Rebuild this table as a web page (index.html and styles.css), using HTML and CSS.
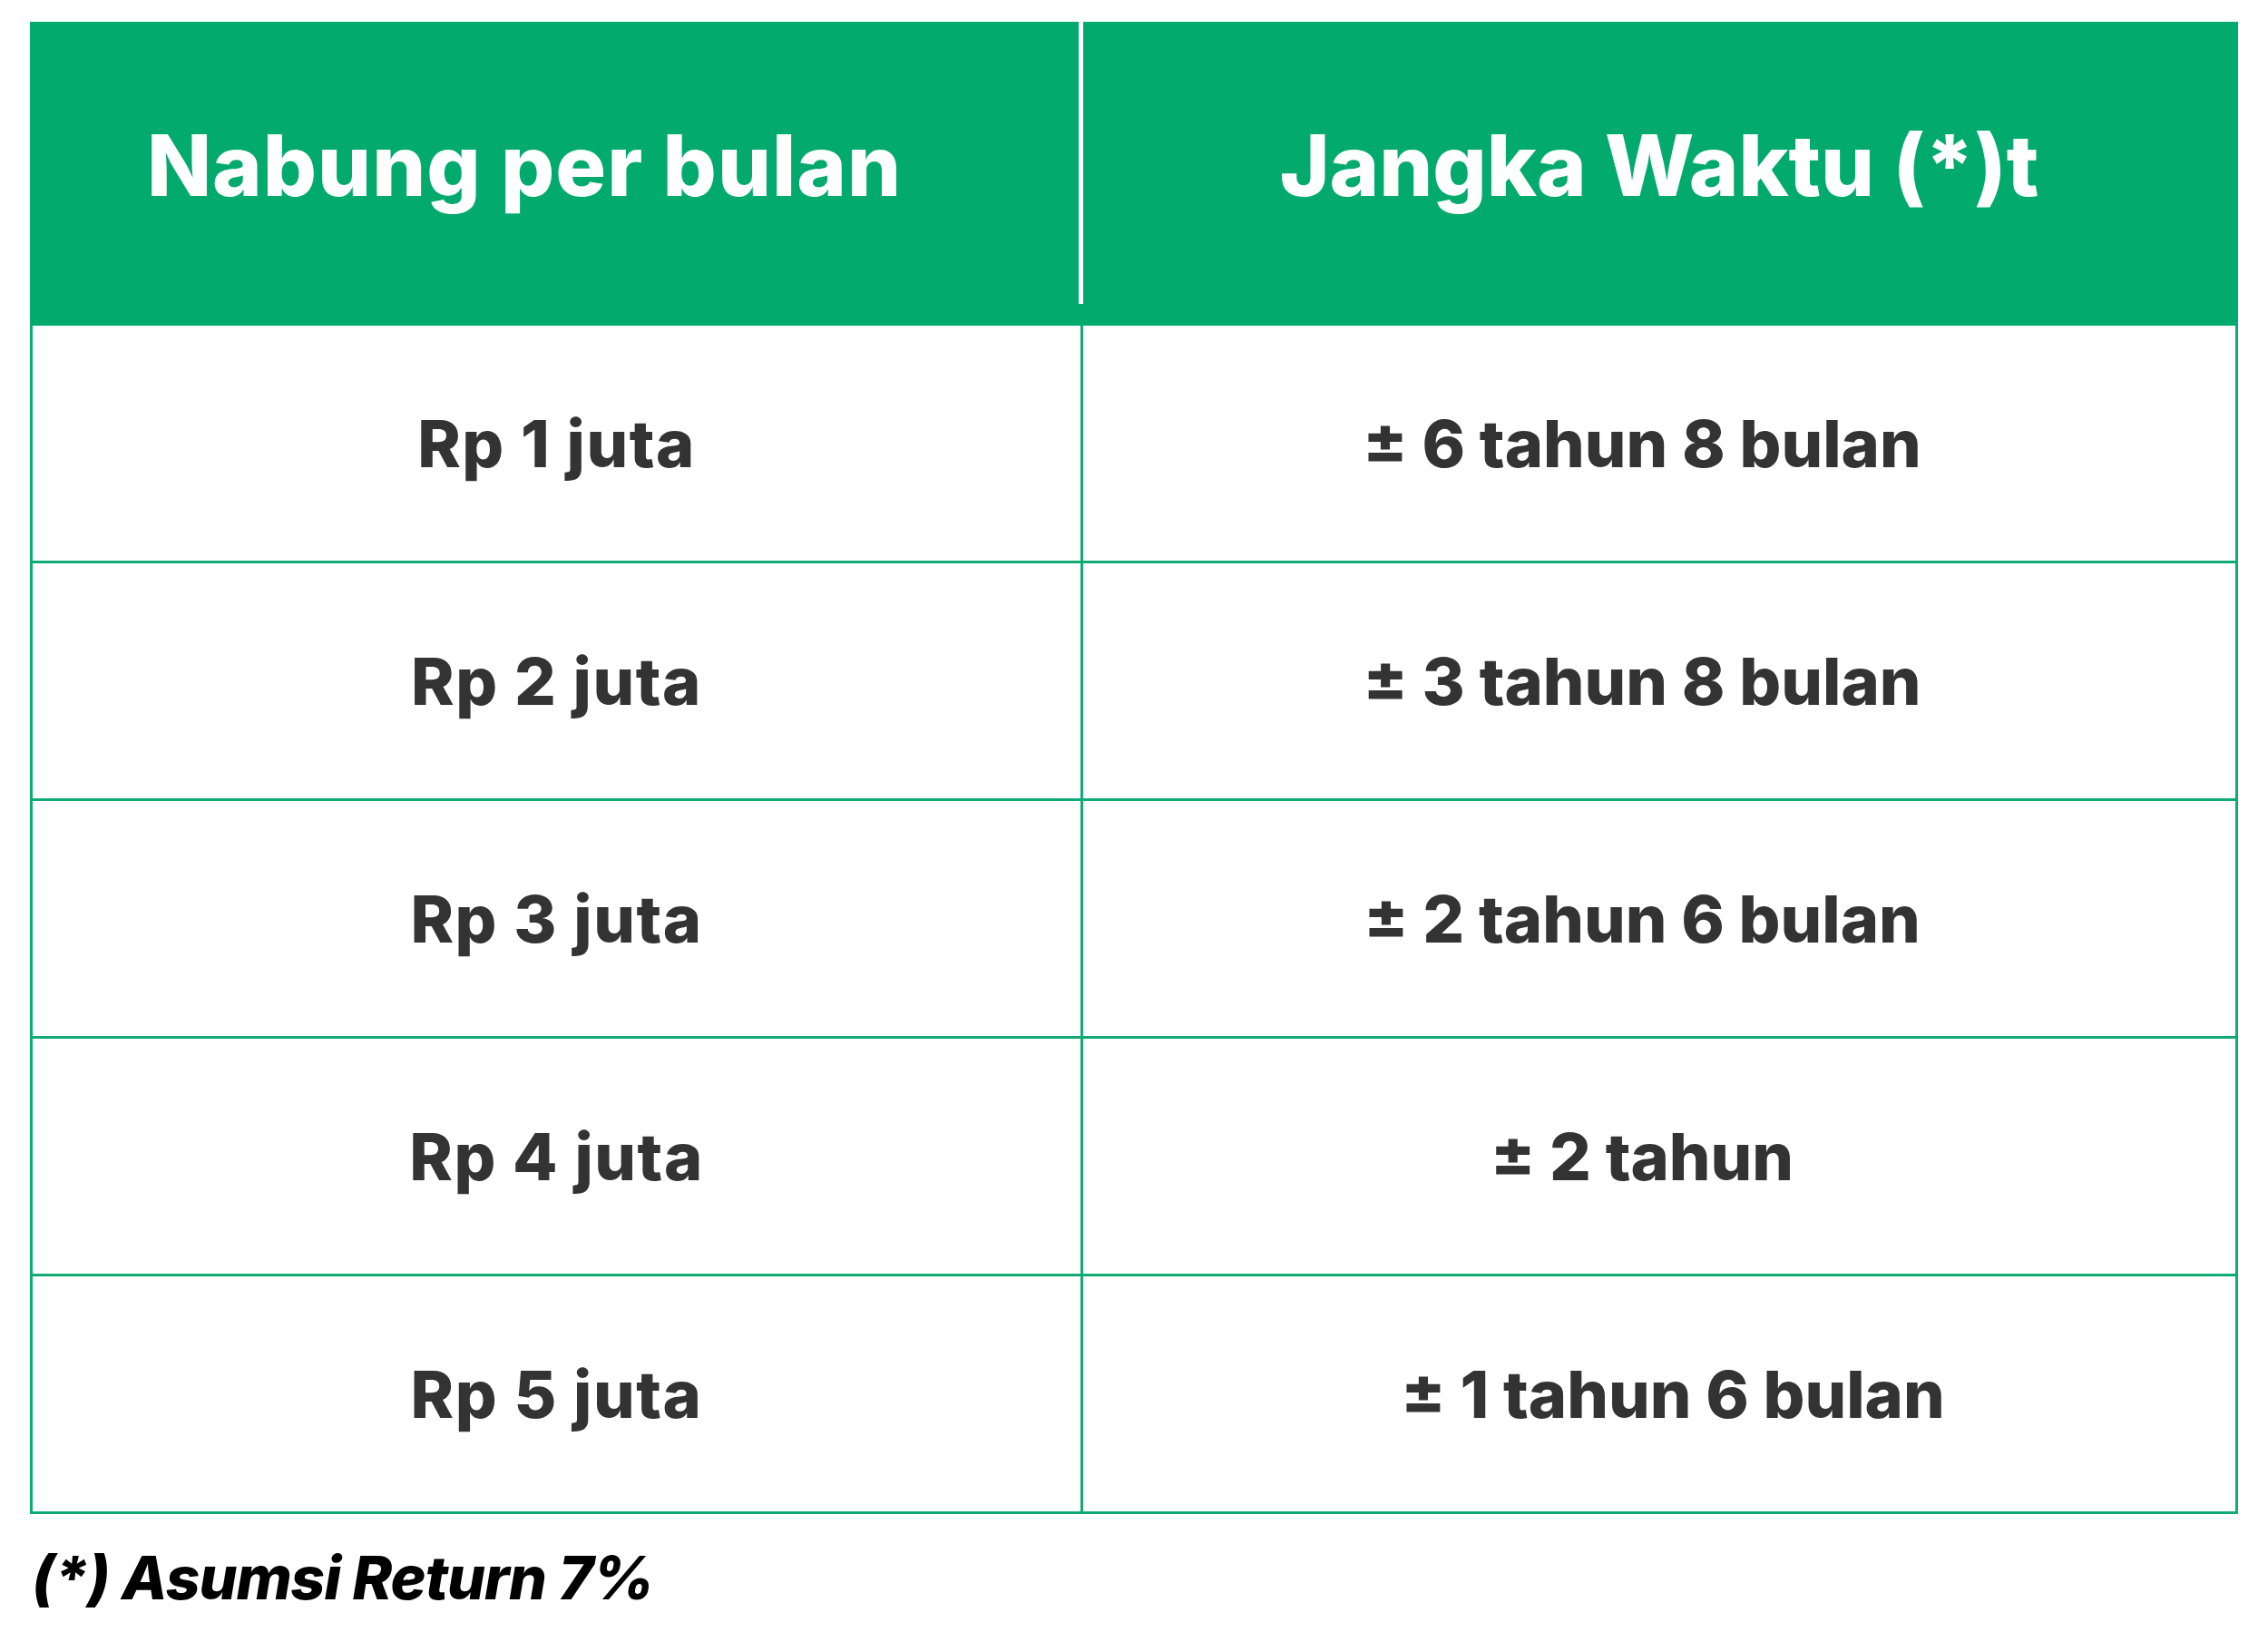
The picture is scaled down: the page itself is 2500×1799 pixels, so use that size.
FILE: index.html
```html
<!DOCTYPE html>
<html lang="id">
<head>
<meta charset="utf-8">
<title>Nabung per bulan</title>
<link rel="stylesheet" href="styles.css">
</head>
<body>
<div class="table">
  <div class="th th-first">Nabung per bulan</div>
  <div class="th">Jangka Waktu (*)t</div>

  <div class="td td-left">Rp 1 juta</div>
  <div class="td td-right">± 6 tahun 8 bulan</div>

  <div class="td td-left">Rp 2 juta</div>
  <div class="td td-right">± 3 tahun 8 bulan</div>

  <div class="td td-left">Rp 3 juta</div>
  <div class="td td-right">± 2 tahun 6 bulan</div>

  <div class="td td-left">Rp 4 juta</div>
  <div class="td td-right">± 2 tahun</div>

  <div class="td td-left">Rp 5 juta</div>
  <div class="td td-right td-shift">± 1 tahun 6 bulan</div>
</div>
<p class="note">(*) Asumsi Return 7%</p>
</body>
</html>
```

FILE: styles.css
```css
html, body {
  margin: 0;
  background: #ffffff;
}

body {
  padding: 24px 33px 0;
  font-family: "Inter", "Lato", "Noto Sans", sans-serif;
}

.table {
  display: grid;
  grid-template-columns: 1158px 1fr;
}

.th {
  height: 335px;
  box-sizing: border-box;
  background: #03aa6e;
  color: #ffffff;
  font-size: 93px;
  font-weight: 800;
  display: flex;
  align-items: center;
  justify-content: center;
  padding-bottom: 20px;
  white-space: nowrap;
}

.th-first {
  position: relative;
  padding-right: 68px;
  letter-spacing: 1px;
}

.th-first::after {
  content: "";
  position: absolute;
  top: 0;
  bottom: 24px;
  right: -3px;
  width: 5px;
  background: #ffffff;
}

.td {
  height: 262px;
  box-sizing: border-box;
  border-left: 3px solid #0fab72;
  border-bottom: 3px solid #0fab72;
  color: #333333;
  font-size: 72px;
  font-weight: 800;
  display: flex;
  align-items: center;
  justify-content: center;
  white-space: nowrap;
}

.td-left {
  letter-spacing: 1.5px;
}

.td-right {
  border-right: 3px solid #0fab72;
  padding-right: 38px;
}

.td-shift {
  padding-right: 0;
  padding-left: 30px;
}

.note {
  margin: 30px 0 0 2px;
  font-size: 66px;
  line-height: 80px;
  font-weight: 800;
  font-style: italic;
  letter-spacing: -1px;
  color: #000000;
}
```
